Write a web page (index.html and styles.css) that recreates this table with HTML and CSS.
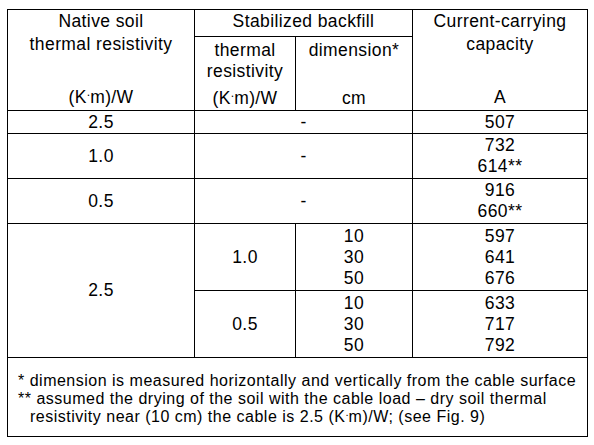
FILE: index.html
```html
<!DOCTYPE html>
<html lang="en">
<head>
    <meta charset="UTF-8">
    <meta name="viewport" content="width=device-width, initial-scale=1.0">
    <title>Current-carrying capacity</title>
    <link rel="stylesheet" href="styles.css">
</head>
<body>
    <table class="spec">
        <colgroup>
            <col class="col-native">
            <col class="col-thermal">
            <col class="col-dim">
            <col class="col-current">
        </colgroup>
        <tr class="head-top">
            <td rowspan="2">
                <div class="head">
                    <div class="title">Native soil<br>thermal resistivity</div>
                    <div>(K<span class="dot">.</span>m)/W</div>
                </div>
            </td>
            <td colspan="2" class="group-title">Stabilized backfill</td>
            <td rowspan="2">
                <div class="head">
                    <div class="title">Current-carrying<br>capacity</div>
                    <div>A</div>
                </div>
            </td>
        </tr>
        <tr>
            <td>
                <div class="sub">
                    <div>thermal<br>resistivity</div>
                    <div>(K<span class="dot">.</span>m)/W</div>
                </div>
            </td>
            <td>
                <div class="sub">
                    <div>dimension*</div>
                    <div>cm</div>
                </div>
            </td>
        </tr>
        <tr class="row-1">
            <td>2.5</td>
            <td colspan="2">-</td>
            <td>507</td>
        </tr>
        <tr class="row-2">
            <td>1.0</td>
            <td colspan="2">-</td>
            <td>732<br>614**</td>
        </tr>
        <tr class="row-2">
            <td>0.5</td>
            <td colspan="2">-</td>
            <td>916<br>660**</td>
        </tr>
        <tr class="row-3">
            <td rowspan="2">2.5</td>
            <td>1.0</td>
            <td>10<br>30<br>50</td>
            <td>597<br>641<br>676</td>
        </tr>
        <tr class="row-3">
            <td>0.5</td>
            <td>10<br>30<br>50</td>
            <td>633<br>717<br>792</td>
        </tr>
        <tr>
            <td colspan="4" class="notes">
                <p class="note">* dimension is measured horizontally and vertically from the cable surface</p>
                <p class="note">** assumed the drying of the soil with the cable load &ndash; dry soil thermal<br>resistivity near (10 cm) the cable is 2.5 (K<span class="dot">.</span>m)/W; (see Fig. 9)</p>
            </td>
        </tr>
    </table>
</body>
</html>
```

FILE: styles.css
```css
body {
    margin: 0;
    padding: 9px 0 0 7px;
    background-color: #fff;
    color: #000;
    font-family: "Liberation Sans", Arial, sans-serif;
}

.spec {
    border-collapse: collapse;
    table-layout: fixed;
    width: 580px;
    font-size: 17.5px;
    letter-spacing: 0.4px;
    line-height: 21px;
}

.col-native {
    width: 187px;
}

.col-thermal {
    width: 101px;
}

.col-dim {
    width: 117px;
}

.col-current {
    width: 175px;
}

.spec td {
    border: 1px solid #000;
    padding: 0;
    text-align: center;
    vertical-align: middle;
}

.dot {
    font-size: 0.7em;
    line-height: 0;
    vertical-align: 0.55em;
    letter-spacing: 0;
}

.head {
    height: 100px;
    box-sizing: border-box;
    padding-bottom: 2px;
    display: flex;
    flex-direction: column;
    justify-content: space-between;
}

.title {
    line-height: 23px;
}

.spec td.group-title {
    height: 26px;
    line-height: 23px;
    vertical-align: top;
}

.sub {
    height: 72px;
    box-sizing: border-box;
    padding: 2px 0 1px;
    display: flex;
    flex-direction: column;
    justify-content: space-between;
}

.row-1 td {
    height: 22px;
}

.row-2 td {
    height: 44px;
}

.row-3 td {
    height: 66px;
}

.spec td.notes {
    height: 79px;
    box-sizing: border-box;
    padding: 14px 0 0 10px;
    text-align: left;
    vertical-align: top;
    font-size: 16px;
    line-height: 18px;
    letter-spacing: 0.5px;
}

.note {
    margin: 0;
    padding-left: 12px;
    text-indent: -12px;
    white-space: nowrap;
}
```
